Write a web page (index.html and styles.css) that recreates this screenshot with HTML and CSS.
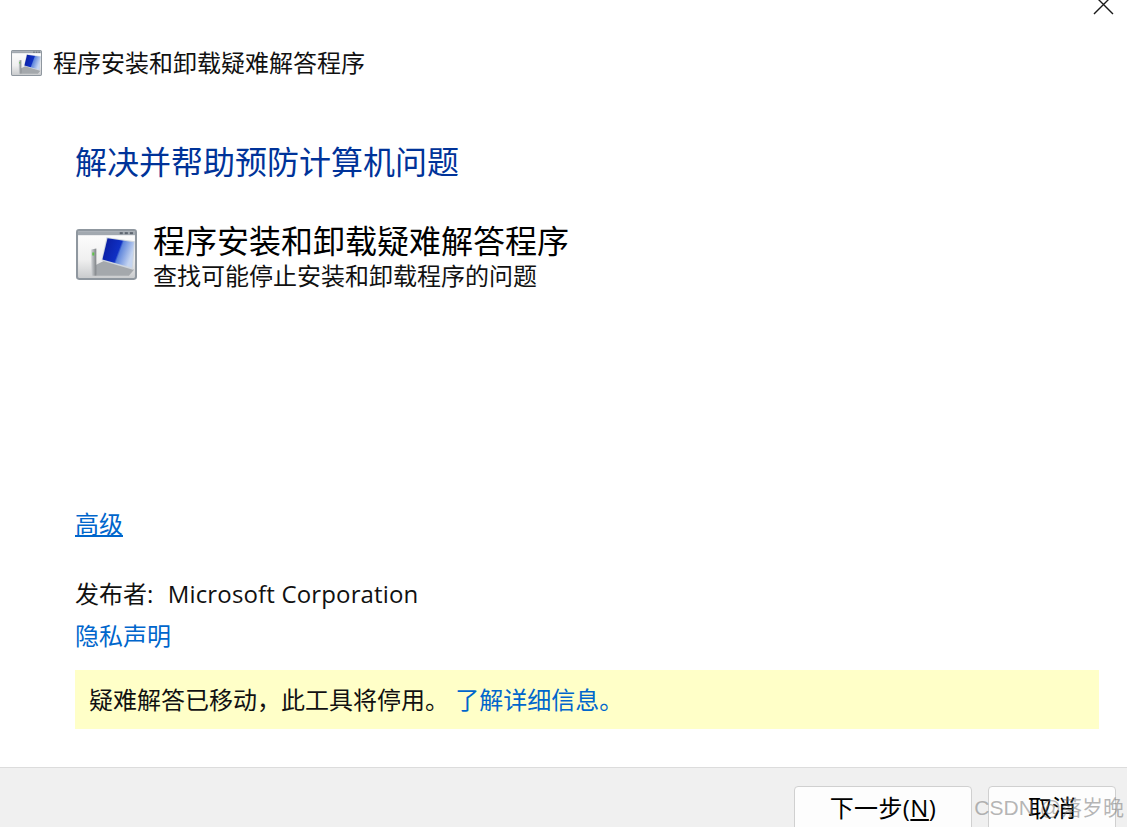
FILE: index.html
```html
<!DOCTYPE html>
<html lang="zh-CN">
<head>
    <meta charset="UTF-8">
    <meta name="viewport" content="width=device-width, initial-scale=1.0">
    <title>程序安装和卸载疑难解答程序</title>
    <link rel="stylesheet" href="styles.css">
</head>
<body>
    <svg width="0" height="0" class="defs">
        <defs>
            <linearGradient id="screen" x1="0" y1="0" x2="1" y2="0.35">
                <stop offset="0" stop-color="#0a1a9a"/>
                <stop offset="0.58" stop-color="#0f30c4"/>
                <stop offset="0.64" stop-color="#5f86dc"/>
                <stop offset="1" stop-color="#c4d4f0"/>
            </linearGradient>
            <linearGradient id="panel" x1="0" y1="0" x2="0" y2="1">
                <stop offset="0" stop-color="#ffffff"/>
                <stop offset="0.6" stop-color="#f0f0f0"/>
                <stop offset="1" stop-color="#c8cacc"/>
            </linearGradient>
            <linearGradient id="tower" x1="0" y1="0" x2="1" y2="0">
                <stop offset="0" stop-color="#d0d3d6"/>
                <stop offset="1" stop-color="#7d8185"/>
            </linearGradient>
            <symbol id="app-icon" viewBox="0 0 60 50">
                <rect x="1" y="1" width="58" height="48" rx="2" fill="url(#panel)" stroke="#8f979f" stroke-width="2"/>
                <rect x="2" y="2" width="56" height="4" fill="#a2a9b0"/>
                <rect x="43" y="3" width="3" height="2" fill="#5e6670"/>
                <rect x="48" y="3" width="3" height="2" fill="#5e6670"/>
                <rect x="53" y="3" width="3" height="2" fill="#5e6670"/>
                <path d="M18 36 L34 28 L57 40 L52 46 L20 46 Z" fill="#a4a8ac"/>
                <path d="M15 20 L20 19 L20 46 L15 46 Z" fill="url(#tower)"/>
                <rect x="16" y="23" width="2" height="3" fill="#5fc24a"/>
                <path d="M30 8 L58 12 L56 40 L25 31 Z" fill="#cfd6de"/>
                <path d="M31 9 L57 13 L55 38 L26 30 Z" fill="url(#screen)"/>
            </symbol>
        </defs>
    </svg>

    <div class="close-row">
        <svg class="close-icon" width="22" height="16" viewBox="0 0 22 16">
            <path d="M1 -5 L20 14 M20 -5 L1 14" stroke="#1a1a1a" stroke-width="1.4" fill="none"/>
        </svg>
    </div>

    <header class="title-bar">
        <svg class="title-icon" width="31" height="26"><use href="#app-icon"/></svg>
        <span>程序安装和卸载疑难解答程序</span>
    </header>

    <main class="content">
        <h1 class="heading">解决并帮助预防计算机问题</h1>

        <div class="item">
            <svg class="item-icon" width="61" height="51"><use href="#app-icon"/></svg>
            <div class="item-text">
                <div class="item-title">程序安装和卸载疑难解答程序</div>
                <div class="item-desc">查找可能停止安装和卸载程序的问题</div>
            </div>
        </div>

        <a class="link advanced" href="#">高级</a>

        <div class="publisher">发布者:&nbsp;&nbsp;<span class="company">Microsoft Corporation</span></div>
        <a class="link privacy" href="#">隐私声明</a>

        <div class="notice">
            疑难解答已移动，此工具将停用。 <a class="link plain" href="#">了解详细信息。</a>
        </div>
    </main>

    <footer class="footer">
        <button class="btn btn-next">下一步(<u>N</u>)</button>
        <button class="btn btn-cancel">取消</button>
    </footer>

    <div class="watermark">CSDN @落岁晚</div>
</body>
</html>
```

FILE: styles.css
```css
html, body {
    height: 100%;
}
body {
    margin: 0;
    height: 827px;
    overflow: hidden;
    position: relative;
    display: flex;
    flex-direction: column;
    background: #fff;
    color: #000;
    font-family: "Open Sans", "Noto Sans CJK SC", sans-serif;
    font-size: 24px;
}
.defs {
    position: absolute;
}
.close-row {
    height: 16px;
    padding-right: 12px;
    display: flex;
    justify-content: flex-end;
}
.title-bar {
    display: flex;
    align-items: center;
    gap: 11px;
    height: 34px;
    margin-top: 30px;
    padding-left: 11px;
    line-height: 34px;
    color: #111;
}
.content {
    flex: 1;
    padding: 0 28px 0 75px;
    display: flex;
    flex-direction: column;
    align-items: flex-start;
}
.heading {
    margin: 60px 0 0;
    font-size: 32px;
    font-weight: 400;
    line-height: 44px;
    color: #003399;
}
.item {
    display: flex;
    gap: 16px;
    margin-top: 38px;
    padding-left: 1px;
}
.item-icon {
    margin-top: 7px;
}
.item-title {
    font-size: 32px;
    line-height: 38px;
}
.item-desc {
    line-height: 32px;
    color: #111;
}
.link {
    color: #0066cc;
    text-decoration: none;
}
.advanced {
    margin-top: 215px;
    line-height: 34px;
    text-decoration: underline;
}
.publisher {
    margin-top: 36px;
    line-height: 34px;
    color: #111;
}
.company {
    margin-left: 2px;
    letter-spacing: 0.15px;
}
.privacy {
    margin-top: 8px;
    line-height: 34px;
}
.notice {
    align-self: stretch;
    box-sizing: border-box;
    height: 59px;
    margin-top: 17px;
    padding-left: 14px;
    line-height: 59px;
    background: #ffffc8;
    color: #111;
}
.footer {
    height: 60px;
    box-sizing: border-box;
    padding: 18px 11px 0 0;
    border-top: 1px solid #dcdcdc;
    background: #f0f0f0;
    display: flex;
    justify-content: flex-end;
    align-items: flex-start;
    gap: 16px;
}
.btn {
    height: 60px;
    padding: 0 0 20px;
    background: #fdfdfd;
    border: 1px solid #d0d0d0;
    border-radius: 4px;
    font: inherit;
    color: #000;
}
.btn-next {
    width: 178px;
    letter-spacing: 0.4px;
}
.btn-cancel {
    width: 128px;
}
.watermark {
    position: absolute;
    right: 3px;
    top: 794px;
    font-size: 21px;
    line-height: 28px;
    color: rgba(110, 110, 110, 0.5);
    font-family: "Liberation Sans", "Noto Sans CJK SC", sans-serif;
}
```
